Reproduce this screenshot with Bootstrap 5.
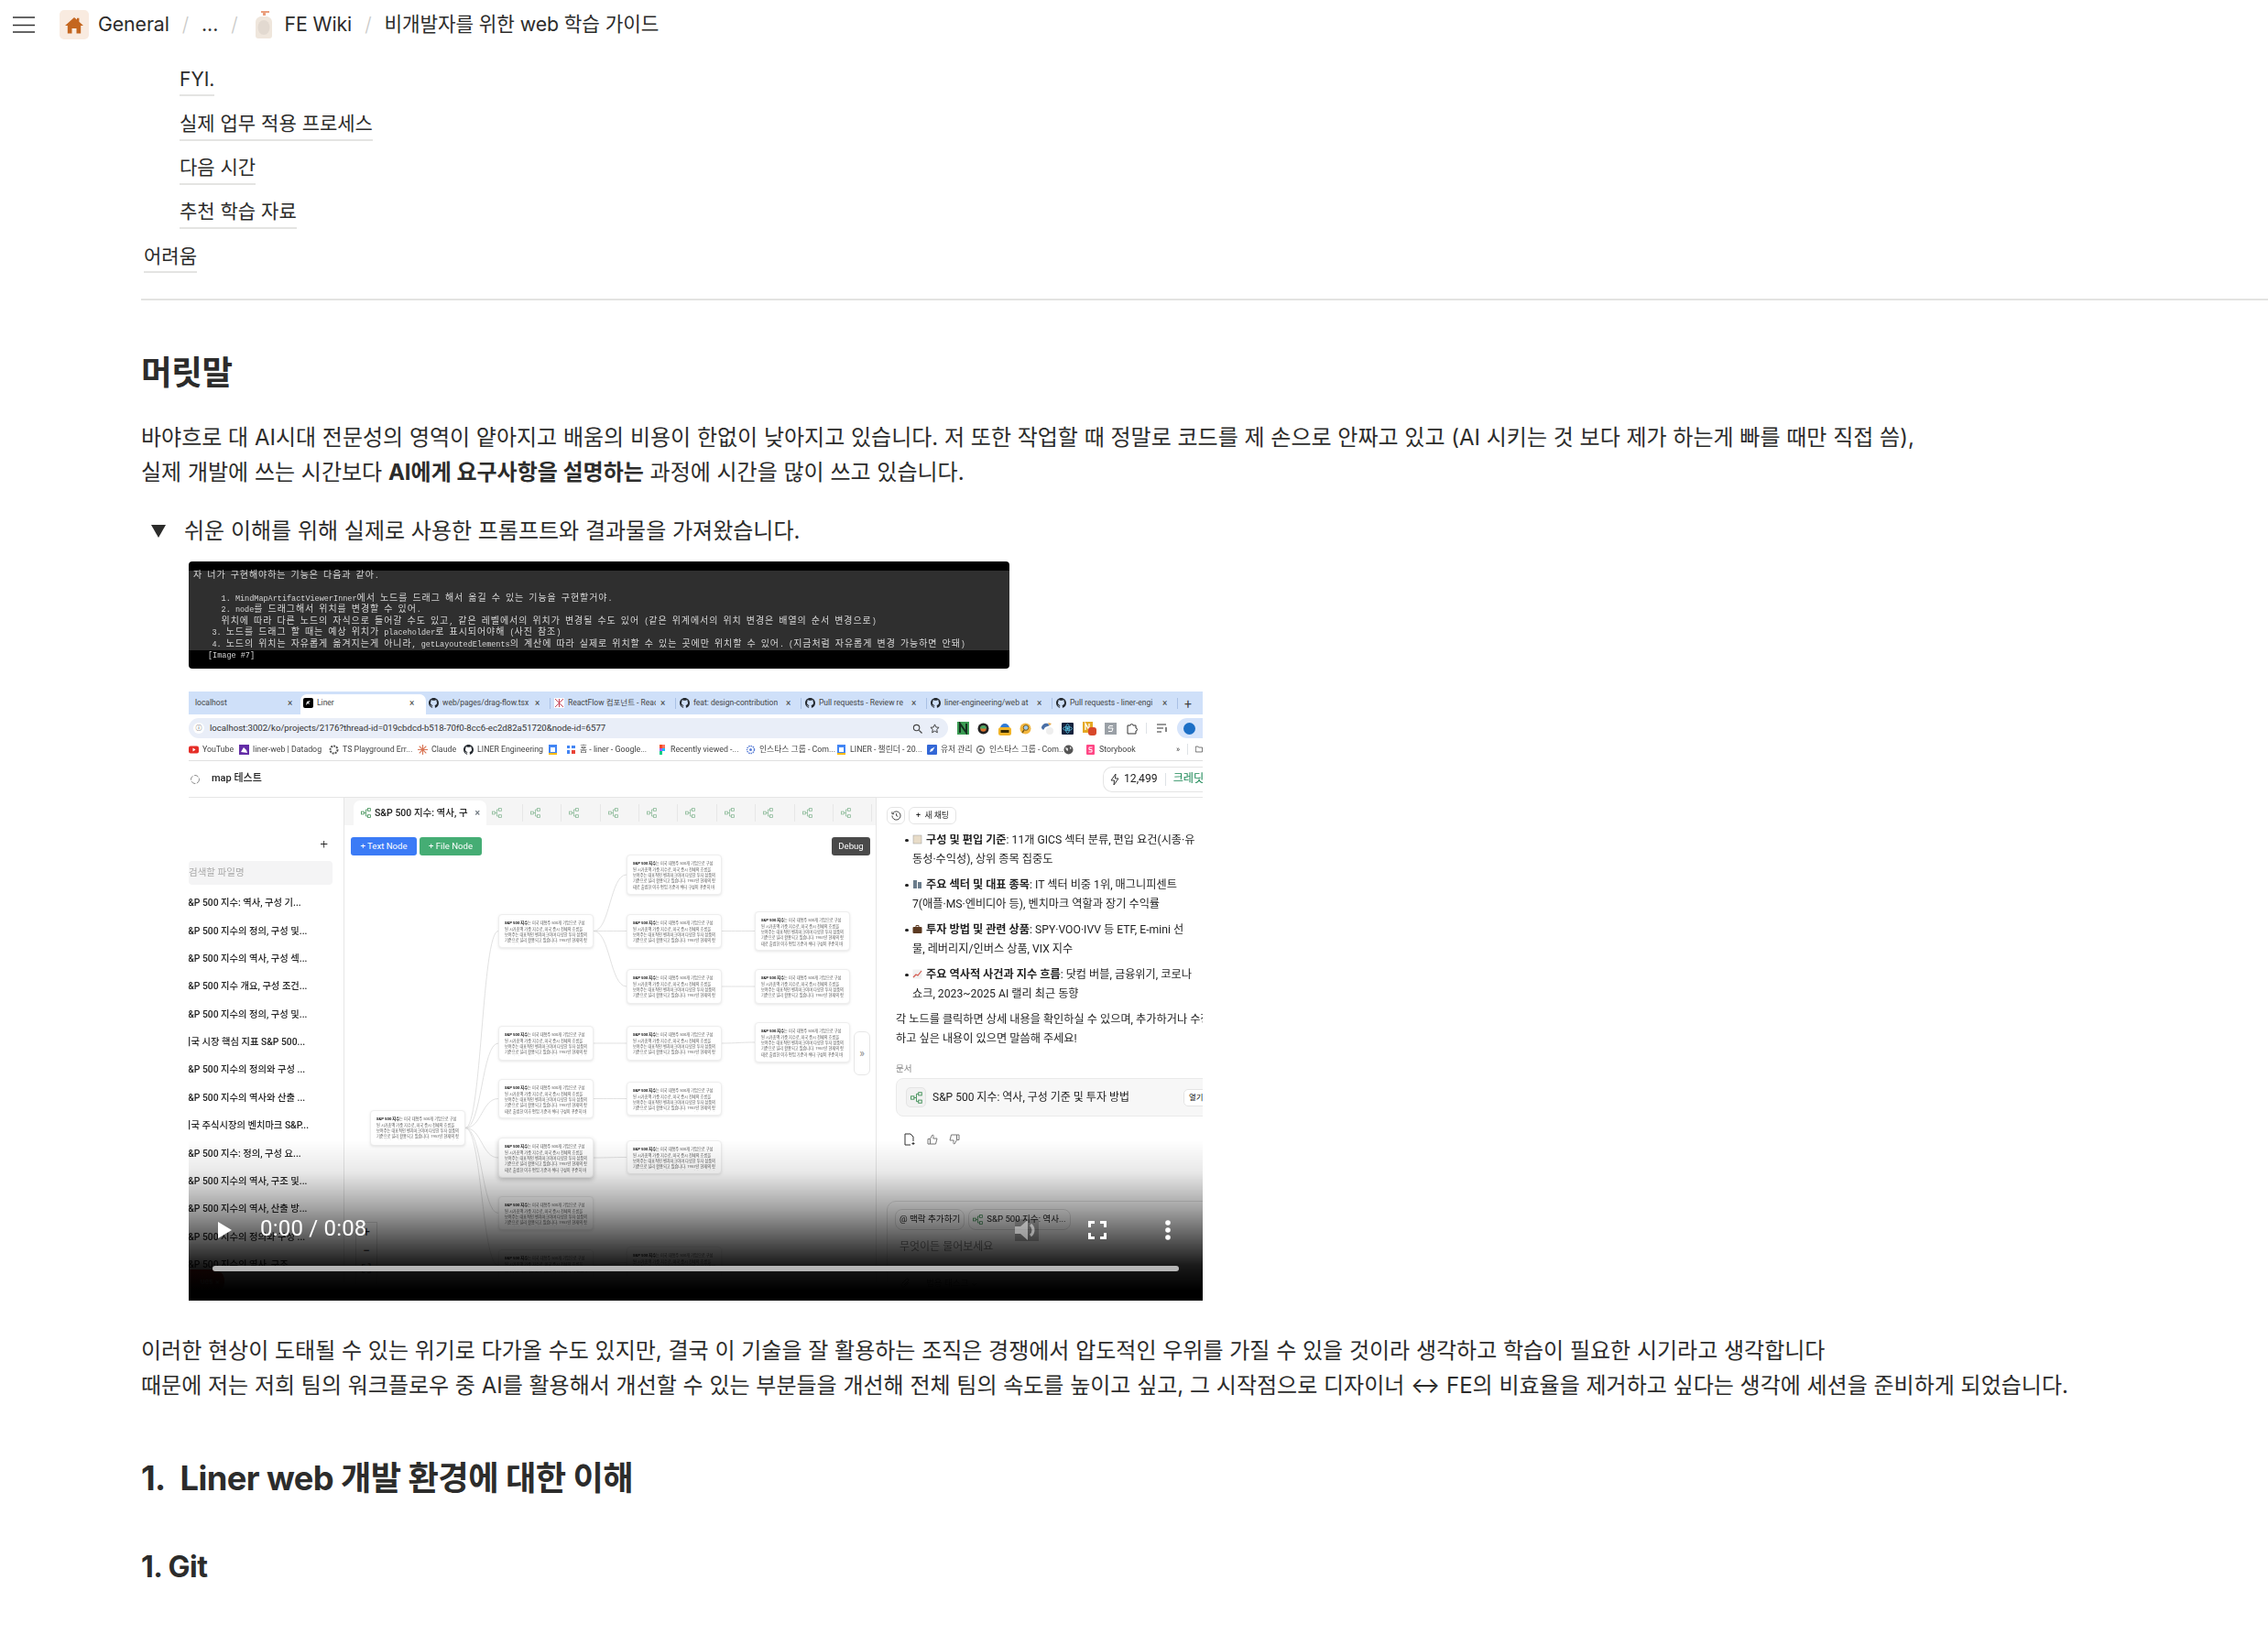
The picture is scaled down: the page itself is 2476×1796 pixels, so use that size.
<!DOCTYPE html>
<html lang="ko">

<head>
    <meta charset="UTF-8">
    <meta name="viewport" content="width=device-width, initial-scale=1.0">
    <title>비개발자를 위한 web 학습 가이드</title>
    <link href="https://cdn.jsdelivr.net/npm/bootstrap@5.3.0/dist/css/bootstrap.min.css" rel="stylesheet">
    <script src="https://cdn.jsdelivr.net/npm/bootstrap@5.3.0/dist/js/bootstrap.bundle.min.js"></script>
    <style>
        body { font-family: Inter, "Noto Sans CJK KR", sans-serif; color: #2c2c2b; background: #fff; overflow-x: hidden; }
        /* 상단 브레드크럼 */
        .topbar { height: 54px; padding-left: 14px; font-size: 21.3px; letter-spacing: -.1px; white-space: nowrap; }
        .burger { width: 24px; height: 18px; margin-right: 27px; }
        .home-box { width: 32px; height: 32px; background: #f9ebe0; border-radius: 5px; margin-right: 10px; }
        .crumb-sep { color: #c9c9c7; margin: 0 14px; font-weight: 300; }
        .bottle { margin: 0 13px 0 4px; }
        /* 본문 */
        .doc { margin-left: 154px; }
        .toc-wrap { padding-top: 10px; }
        .toc-row { height: 48.2px; font-size: 21px; }
        .toc-row span { border-bottom: 2px solid #e4e4e2; padding-bottom: 1px; }
        .toc-sub { padding-left: 42px; }
        .toc-top { padding-left: 3px; }
        .doc-rule { height: 2px; background: #e3e3e1; margin-top: 21px; }
        .doc-h1 { font-size: 36.5px; font-weight: 600; line-height: 50px; margin: 54.5px 0 0; letter-spacing: -.3px; }
        .doc-p { font-size: 24px; line-height: 37.6px; margin: 0; white-space: nowrap; }
        .doc-p-first { margin-top: 26.5px; }
        .doc-h2 { font-size: 36.3px; font-weight: 700; line-height: 50px; margin: 58px 0 0; letter-spacing: -.6px; }
        .doc-h3 { font-size: 32px; font-weight: 700; line-height: 44px; margin: 50px 0 0; letter-spacing: -.5px; }
        .toggle-row { height: 38px; font-size: 24px; margin-top: 27px; }
        .toggle-tri { width: 0; height: 0; border-left: 8.5px solid transparent; border-right: 8.5px solid transparent; border-top: 14px solid #2c2c2b; margin: 0 20px 0 11px; }
        /* 프롬프트 이미지 */
        .prompt-shot { width: 896px; height: 117px; margin: 14px 0 25px 52px; background: #000; border-radius: 4px; padding-top: 10px; overflow: hidden; color: #d5d5d5; font-family: "Liberation Mono", monospace; font-size: 8.5px; filter: blur(.35px); }
        .prompt-body { height: 87px; background: #2f2f2f; padding: 0 5px; line-height: 12.4px; white-space: pre; }
        .prompt-tail { padding-left: 21px; line-height: 12px; white-space: pre; }
        .prompt-ko { font-family: "Noto Sans CJK KR", sans-serif; font-size: 10px; letter-spacing: .93px; line-height: 0; }
        /* 영상 */
        .video-wrap { width: 1107px; height: 665px; margin: 0 0 36px 52px; position: relative; overflow: hidden; background: #fff; }
        .shot { width: 1107px; height: 665px; filter: blur(.3px); font-family: Roboto, Inter, "Noto Sans CJK KR", sans-serif; color: #222; overflow: hidden; }
        .shot-tabs { height: 25px; background: #cfe0f9; padding-top: 3px; font-size: 8.5px; color: #444; }
        .shot-tab { width: 137px; height: 22px; flex: none; padding: 0 0 3px 3px; white-space: nowrap; overflow: hidden; }
        .shot-tab.first { width: 122px; }
        .shot-tab.on { background: #fff; border-radius: 7px 7px 0 0; }
        .shot-tab b { font-weight: 400; width: 96px; overflow: hidden; margin-left: 4px; }
        .shot-tab i { font-style: normal; margin-left: 5px; font-size: 10px; }
        .tab-sep { width: 1px; height: 12px; background: #a9c0e4; margin-left: auto; margin-right: 1px; }
        .tab-ico { width: 11px; height: 11px; flex: none; display: block; }
        .tab-plus { font-size: 14px; margin-left: 6px; }
        .shot-url { height: 26px; padding-top: 4px; background: #fff; }
        .url-pill { width: 829px; height: 22px; background: #e9eef8; border-radius: 11px; font-size: 9.6px; color: #333; padding: 0 9px 0 5px; white-space: nowrap; }
        .url-dot { width: 12px; height: 12px; background: #fff; border-radius: 50%; margin-right: 6px; font-size: 7px; }
        .ext-icons { gap: 9.5px; padding-left: 10px; }
        .ext-sep { height: 12px; }
        .ext-pill { width: 28px; height: 22px; background: #d6e4fb; border-radius: 11px 0 0 11px; margin-left: 1px; }
        .ext-avatar { width: 13px; height: 13px; border-radius: 50%; background: #1c6fc6; margin-right: 8px; }
        .shot-marks { height: 25px; border-bottom: 1px solid #e0e0e0; font-size: 8.8px; color: #444; white-space: nowrap; }
        .mark-item { flex: none; overflow: hidden; gap: 4px; }
        .mark-ico { width: 11px; height: 11px; flex: none; }
        .shot-head { height: 40px; border-bottom: 1px solid #e6e6e6; font-size: 11px; font-weight: 500; padding-left: 1px; }
        .credit-pill { height: 28px; width: 109px; flex: none; border: 1px solid #e4e4e4; border-right: 0; border-radius: 10px 0 0 10px; padding-left: 6px; font-size: 12.2px; font-weight: 400; white-space: nowrap; overflow: hidden; }
        .credit-pill > * { flex-shrink: 0; }
        .credit-sep { height: 14px; }
        .shot-main { height: 548px; }
        .shot-side { width: 170px; flex: none; border-right: 1px solid #e6e6e6; font-size: 10.3px; white-space: nowrap; font-weight: 500; overflow: hidden; }
        .side-plus { height: 69px; padding: 40px 17px 0 0; font-size: 15px; line-height: 20px; font-weight: 300; }
        .side-search { height: 26px; width: 157px; background: #f4f4f5; border-radius: 4px; color: #aaa; font-size: 10.5px; font-weight: 400; line-height: 26px; margin-bottom: 5px; }
        .side-row { height: 30.4px; line-height: 30.4px; margin-left: -7px; width: 175px; overflow: hidden; }
        .shot-map { width: 581px; flex: none; border-right: 1px solid #e6e6e6; }
        .map-tabs { height: 30px; background: #f5f5f5; padding: 3px 0 0 10px; font-size: 10.5px; font-weight: 500; overflow: hidden; }
        .map-tab { width: 145px; height: 27px; background: #fff; border-radius: 7px 7px 0 0; padding-left: 8px; white-space: nowrap; overflow: hidden; flex: none; }
        .map-tab-list { margin-left: -2.5px; }
        .map-tab-sm { width: 42.4px; height: 19px; flex: none; border-right: 1px solid #dedede; padding-left: 8px; opacity: .6; }
        .map-canvas { height: 518px; position: relative; background-color: #fff; background-image: radial-gradient(#dcdcdc .6px, transparent .7px); background-size: 8px 8px; }
        .map-lines { position: absolute; left: 0; top: 0; }
        .map-node { position: absolute; background: #fff; border: 1px solid #eee; border-radius: 4px; box-shadow: 0 1px 3px rgba(0,0,0,.1); font-size: 4.2px; line-height: 6.4px; padding: 6px 6px 0; color: #555; }
        .map-node div { overflow: hidden; }
        .map-node.hot { box-shadow: 0 2px 5px rgba(0,0,0,.22); }
        .map-node b { font-weight: 700; color: #111; }
        .map-btn { position: absolute; top: 13px; height: 20px; border-radius: 3px; color: #fff; font-size: 9.6px; line-height: 20px; text-align: center; }
        .btn-text-node { left: 7px; width: 72px; background: #3b7bf6; }
        .btn-file-node { left: 82px; width: 68px; background: #45ad74; }
        .btn-debug { left: 532px; width: 42px; background: #4a4a4a; }
        .map-fold { position: absolute; left: 556px; top: 225px; width: 18px; height: 48px; border: 1px solid #e6e6e6; border-radius: 6px; background: #fff; color: #888; font-size: 12px; }
        .map-zoom { position: absolute; left: 12px; top: 433px; width: 24px; height: 85px; border: 1px solid #ddd; font-size: 14px; line-height: 20px; text-align: center; background: #fff; }
        .shot-toast { position: absolute; left: 0; top: 631px; width: 39px; height: 26px; border-radius: 0 12px 12px 0; background: #b3261e; color: #fff; font-size: 8px; line-height: 26px; white-space: nowrap; text-align: right; padding-right: 5px; }
        .shot-chat { width: 356px; flex: none; font-size: 12.2px; font-weight: 400; white-space: nowrap; overflow: hidden; }
        .chat-top { height: 39px; padding: 10px 0 0 11px; gap: 4px; }
        .chat-btn { height: 19px; border: 1px solid #e4e4e4; border-radius: 6px; font-size: 8.8px; background: #fff; }
        .chat-btn-hist { width: 20px; }
        .chat-btn-new { width: 52px; }
        .chat-scroll { height: 396px; overflow: hidden; margin-top: 1px; position: relative; }
        .chat-ul { list-style: none; margin: -4.5px 0 0; padding: 0 0 0 39px; line-height: 21.2px; }
        .chat-ul li { margin-bottom: 6.7px; position: relative; }
        .chat-ul li::before { content: ""; position: absolute; left: -8px; top: 9px; width: 3.5px; height: 3.5px; border-radius: 50%; background: #222; }
        .chat-ul b { font-weight: 700; }
        .chat-emo { display: inline-block; width: 11px; height: 11px; vertical-align: -1px; margin-right: 4px; }
        .chat-p { padding-left: 21px; line-height: 21.2px; margin: 6px 0 0; }
        .chat-label { padding-left: 21px; color: #888; font-size: 9.6px; margin-top: 13px; line-height: 18px; }
        .chat-doc { margin: 1px 0 0 21px; height: 42px; width: 360px; background: #f7f7f7; border: 1px solid #eaeaea; border-radius: 8px; padding-left: 10px; font-size: 12px; }
        .chat-doc-ico { width: 22px; height: 22px; border: 1px solid #e4e4e4; border-radius: 5px; background: #f1f1f1; margin-right: 7px; }
        .chat-open { position: absolute; left: 335px; width: 40px; height: 19px; border: 1px solid #e4e4e4; border-radius: 5px; background: #fff; font-size: 8.5px; padding-left: 5px; }
        .chat-acts { padding: 18px 0 0 30px; gap: 12px; }
        .chat-input { margin: 4px 0 0 11px; width: 370px; height: 120px; border: 1px solid #e4e4e4; border-radius: 10px; padding: 8px; font-size: 9.6px; }
        .chat-chip { height: 23px; border: 1px solid #e0e0e0; border-radius: 8px; padding: 0 4px; }
        .chat-hint { font-size: 12px; color: #888; margin: 9px 0 0 5px; }
        .chat-foot { margin: 24px 0 0 5px; color: #666; gap: 9px; }
        /* 영상 컨트롤 */
        .video-ctrl { position: absolute; left: 0; right: 0; bottom: 0; height: 175px; background: linear-gradient(to bottom, rgba(0,0,0,0) 0, rgba(0,0,0,.09) 35px, rgba(0,0,0,.22) 54px, rgba(0,0,0,.36) 74px, rgba(0,0,0,.9) 137px, #000 164px); color: #fff; }
        .ctrl-row { position: absolute; left: 0; right: 0; top: 75px; height: 46px; font-family: Roboto, sans-serif; font-size: 24px; }
        .ctrl-play { margin-left: 32px; }
        .ctrl-time { margin: -4px 0 0 31px; width: 120px; white-space: nowrap; font-weight: 400; letter-spacing: .2px; flex: none; }
        .ctrl-vol { margin-left: 704px; opacity: .38; }
        .ctrl-full { margin-left: 55px; }
        .ctrl-more { margin-left: 64px; }
        .ctrl-bar { position: absolute; left: 26px; top: 137px; width: 1055px; height: 6px; border-radius: 3px; background: #b7b7b7; }
    </style>
</head>

<body>
    <svg width="0" height="0" class="d-block">
        <defs>
            <symbol id="gh" viewBox="0 0 16 16"><path fill="#24292f" d="M8 0C3.58 0 0 3.58 0 8c0 3.54 2.29 6.53 5.47 7.59.4.07.55-.17.55-.38 0-.19-.01-.82-.01-1.49-2.01.37-2.53-.49-2.69-.94-.09-.23-.48-.94-.82-1.13-.28-.15-.68-.52-.01-.53.63-.01 1.08.58 1.23.82.72 1.21 1.87.87 2.33.66.07-.52.28-.87.51-1.07-1.78-.2-3.64-.89-3.64-3.95 0-.87.31-1.59.82-2.15-.08-.2-.36-1.02.08-2.12 0 0 .67-.21 2.2.82.64-.18 1.32-.27 2-.27.68 0 1.36.09 2 .27 1.53-1.04 2.2-.82 2.2-.82.44 1.1.16 1.92.08 2.12.51.56.82 1.27.82 2.15 0 3.07-1.87 3.75-3.65 3.95.29.25.54.73.54 1.48 0 1.07-.01 1.93-.01 2.2 0 .21.15.46.55.38A8.013 8.013 0 0016 8c0-4.42-3.58-8-8-8z"/></symbol>
            <symbol id="flow" viewBox="0 0 14 14"><g fill="none" stroke="#3f8f55" stroke-width="1"><rect x=".6" y="5.200" width="3.600" height="3.600"/><rect x="9.400" y=".8" width="3.800" height="3.400"/><rect x="9.400" y="9.800" width="3.800" height="3.400"/><path d="M4.200 7H7V2.500h2.400M7 7v4.500h2.400"/></g></symbol>
        </defs>
    </svg>

    <!-- 상단 브레드크럼 -->
    <div class="topbar d-flex align-items-center">
        <svg class="burger" viewBox="0 0 24 18"><path d="M0 1h24M0 9.500h24M0 17h24" stroke="#333" stroke-width="1.700"/></svg>
        <span class="home-box d-flex align-items-center justify-content-center">
            <svg width="20" height="19" viewBox="0 0 20 19"><path fill="#c4661f" d="M10 1l3 2.600V1.800h2.400v4L20 10h-2.800v8.500h-4.700v-5.500h-5v5.500H2.800V10H0z"/></svg>
        </span>
        <span>General</span><span class="crumb-sep">/</span><span>...</span><span class="crumb-sep">/</span>
        <svg class="bottle" width="20" height="30" viewBox="0 0 20 30"><path fill="#eb9f7d" d="M7 0h9v2h-4v3h-3V2H7z"/><path fill="#efe6dc" d="M6 6h8c3 1 5 3 5 6v15c0 2-1 3-3 3H4c-2 0-3-1-3-3V12c0-3 2-5 5-6z"/><ellipse cx="10" cy="18" rx="6.500" ry="8" fill="#e2d9d0"/></svg>
        <span>FE Wiki</span><span class="crumb-sep">/</span><span>비개발자를 위한 web 학습 가이드</span>
    </div>

    <div class="doc">
        <div class="toc-wrap">
            <div class="toc-row toc-sub d-flex align-items-center"><span>FYI.</span></div>
            <div class="toc-row toc-sub d-flex align-items-center"><span>실제 업무 적용 프로세스</span></div>
            <div class="toc-row toc-sub d-flex align-items-center"><span>다음 시간</span></div>
            <div class="toc-row toc-sub d-flex align-items-center"><span>추천 학습 자료</span></div>
            <div class="toc-row toc-top d-flex align-items-center"><span>어려움</span></div>
        </div>
        <div class="doc-rule"></div>

        <h1 class="doc-h1">머릿말</h1>
        <p class="doc-p doc-p-first">바야흐로 대 AI시대 전문성의 영역이 얕아지고 배움의 비용이 한없이 낮아지고 있습니다. 저 또한 작업할 때 정말로 코드를 제 손으로 안짜고 있고 (AI 시키는 것 보다 제가 하는게 빠를 때만 직접 씀),<br>실제 개발에 쓰는 시간보다 <strong>AI에게 요구사항을 설명하는</strong> 과정에 시간을 많이 쓰고 있습니다.</p>

        <div class="toggle-row d-flex align-items-center">
            <span class="toggle-tri"></span><span>쉬운 이해를 위해 실제로 사용한 프롬프트와 결과물을 가져왔습니다.</span>
        </div>

        <div class="prompt-shot">
            <div class="prompt-body" id="promptBody"></div>
            <div class="prompt-tail">[Image #7]</div>
        </div>

        <div class="video-wrap">
            <div class="shot">
                <div class="shot-tabs d-flex" id="shotTabs"></div>
                <div class="shot-url d-flex align-items-center">
                    <div class="url-pill d-flex align-items-center">
                        <span class="url-dot d-flex align-items-center justify-content-center">ⓘ</span>
                        <span class="flex-grow-1">localhost:3002/ko/projects/2176?thread-id=019cbdcd-b518-70f0-8cc6-ec2d82a51720&amp;node-id=6577</span>
                        <svg class="me-2" width="11" height="11" viewBox="0 0 12 12"><circle cx="5" cy="5" r="3.500" fill="none" stroke="#444" stroke-width="1.200"/><path d="M8 8l3.500 3.500" stroke="#444" stroke-width="1.400"/></svg>
                        <svg width="11" height="11" viewBox="0 0 12 12"><path fill="none" stroke="#333" d="M6 1l1.500 3.300 3.500.4-2.600 2.400.7 3.600L6 8.900l-3.100 1.800.7-3.600L1 4.700l3.500-.4z"/></svg>
                    </div>
                    <div class="ext-icons d-flex align-items-center">
                        <svg width="13" height="14" viewBox="0 0 13 14"><rect width="13" height="14" fill="#3a9b52"/><path d="M3 12V2l7 10V2" fill="none" stroke="#14301e" stroke-width="2"/></svg>
                        <svg width="13" height="13" viewBox="0 0 13 13"><circle cx="6.500" cy="6.500" r="6" fill="#222"/><circle cx="6.500" cy="6.500" r="3.200" fill="#d9722c"/><path d="M3 6.500a3.500 3.500 0 0 1 7 0z" fill="#4aa564"/></svg>
                        <svg width="14" height="18" viewBox="0 0 14 18"><path fill="#2f7ad6" d="M2 9a5 5 0 0 1 10 0z"/><rect y="8" width="14" height="9" rx="2.500" fill="#f0b429"/><rect x="2.500" y="11" width="9" height="3" fill="#3a2c00"/></svg>
                        <svg width="13" height="13" viewBox="0 0 13 13"><circle cx="6.500" cy="6.500" r="6" fill="#f3b73f"/><circle cx="7" cy="5.500" r="2.800" fill="#9fc7e8" stroke="#7a5a12"/><path d="M5 8l-2 3" stroke="#7a5a12" stroke-width="1.400"/></svg>
                        <svg width="14" height="14" viewBox="0 0 14 14"><path fill="#4a6fa5" d="M1 7c0-4 4-6 7-5l2 2-5 2-2 3z"/><path fill="#e8a33c" d="M8 1l4 1-2 2z"/><circle cx="10" cy="10" r="4" fill="#eee"/></svg>
                        <svg width="13" height="13" viewBox="0 0 13 13"><rect width="13" height="13" rx="1" fill="#17233d"/><circle cx="6.500" cy="6.500" r="1.200" fill="#61dafb"/><ellipse cx="6.500" cy="6.500" rx="5" ry="2" fill="none" stroke="#61dafb" stroke-width=".7"/><ellipse cx="6.500" cy="6.500" rx="2" ry="5" fill="none" stroke="#61dafb" stroke-width=".7"/></svg>
                        <svg width="15" height="15" viewBox="0 0 15 15"><rect width="11" height="12" fill="#e5a823"/><path d="M3 9V2l4 7V2" fill="none" stroke="#fff" stroke-width="1.300"/><rect x="6" y="6" width="9" height="9" rx="3" fill="#d8482a"/></svg>
                        <svg width="13" height="13" viewBox="0 0 13 13"><rect width="13" height="13" fill="#9aa0a6"/><path d="M9 3.500H5L4 6h5l-1 3.500H4" fill="none" stroke="#fff"/></svg>
                        <svg width="13" height="13" viewBox="0 0 13 13"><path fill="none" stroke="#333" d="M2 3h3a1.500 1.500 0 0 1 3 0h3v3a1.500 1.500 0 0 1 0 3v3H2z"/></svg>
                        <span class="border-start ext-sep"></span>
                        <svg width="13" height="12" viewBox="0 0 13 12"><path d="M1 2h10M1 6h7M1 10h5M11 5v5" stroke="#333" stroke-width="1.200"/></svg>
                        <span class="ext-pill d-flex align-items-center justify-content-end"><span class="ext-avatar"></span></span>
                    </div>
                </div>
                <div class="shot-marks d-flex align-items-center" id="shotMarks"></div>
                <div class="shot-head d-flex align-items-center justify-content-between">
                    <div class="d-flex align-items-center">
                        <svg width="12" height="12" viewBox="0 0 12 12" class="me-2"><circle cx="6" cy="6" r="4.500" fill="none" stroke="#888" stroke-dasharray="5 1.500"/></svg>
                        <span class="ms-1">map 테스트</span>
                    </div>
                    <div class="credit-pill d-flex align-items-center">
                        <svg width="12" height="14" viewBox="0 0 12 14"><path fill="none" stroke="#333" d="M7 1L2 8h3.500L5 13l5-7H6.500z"/></svg>
                        <span class="ms-1">12,499</span>
                        <span class="border-start mx-2 credit-sep"></span>
                        <span class="text-success">크레딧 충전</span>
                    </div>
                </div>
                <div class="shot-main d-flex">
                    <div class="shot-side">
                        <div class="side-plus text-end">+</div>
                        <div class="side-search">검색할 파일명</div>
                        <div id="sideList"></div>
                    </div>
                    <div class="shot-map">
                        <div class="map-tabs d-flex">
                            <div class="map-tab d-flex align-items-center">
                                <svg width="11" height="11" class="me-1"><use href="#flow"/></svg>
                                <span>S&amp;P 500 지수: 역사, 구</span><span class="ms-2 text-secondary">×</span>
                            </div>
                            <div class="map-tab-list d-flex align-items-center" id="mapTabs"></div>
                        </div>
                        <div class="map-canvas" id="mapCanvas">
                            <svg class="map-lines" width="581" height="518" id="mapLines"></svg>
                            <div class="map-btn btn-text-node">+ Text Node</div>
                            <div class="map-btn btn-file-node">+ File Node</div>
                            <div class="map-btn btn-debug">Debug</div>
                            <div class="map-fold d-flex align-items-center justify-content-center">»</div>
                            <div class="map-zoom">+<br>−<br>⛶</div>
                        </div>
                    </div>
                    <div class="shot-chat">
                        <div class="chat-top d-flex">
                            <span class="chat-btn chat-btn-hist d-flex align-items-center justify-content-center">
                                <svg width="11" height="11" viewBox="0 0 12 12"><path fill="none" stroke="#333" d="M2 3a5 5 0 1 1-1 3M1 1.500V4h2.500M6 3.500V6l2 1"/></svg>
                            </span>
                            <span class="chat-btn chat-btn-new d-flex align-items-center justify-content-center">+ &nbsp;새 채팅</span>
                        </div>
                        <div class="chat-scroll">
                            <ul class="chat-ul">
                                <li><svg class="chat-emo" viewBox="0 0 11 11"><rect x="1" y="1" width="9" height="9" fill="#e8dcc8" stroke="#999" stroke-width=".5"/></svg><b>구성 및 편입 기준</b>: 11개 GICS 섹터 분류, 편입 요건(시총·유<br>동성·수익성), 상위 종목 집중도</li>
                                <li><svg class="chat-emo" viewBox="0 0 11 11"><path fill="#6b7d8c" d="M1 1h4v9H1zM6 3h4v7H6z"/></svg><b>주요 섹터 및 대표 종목</b>: IT 섹터 비중 1위, 매그니피센트<br>7(애플·MS·엔비디아 등), 벤치마크 역할과 장기 수익률</li>
                                <li><svg class="chat-emo" viewBox="0 0 11 11"><rect x=".5" y="3" width="10" height="7" rx="1" fill="#5c3a21"/><path d="M4 3V1.500h3V3" fill="none" stroke="#5c3a21"/></svg><b>투자 방법 및 관련 상품</b>: SPY·VOO·IVV 등 ETF, E-mini 선<br>물, 레버리지/인버스 상품, VIX 지수</li>
                                <li><svg class="chat-emo" viewBox="0 0 11 11"><rect x=".5" y=".5" width="10" height="10" fill="#f1f1f1"/><path d="M1 9l3-3 2 1 4-5" fill="none" stroke="#d4574c" stroke-width="1.200"/></svg><b>주요 역사적 사건과 지수 흐름</b>: 닷컴 버블, 금융위기, 코로나<br>쇼크, 2023~2025 AI 랠리 최근 동향</li>
                            </ul>
                            <p class="chat-p">각 노드를 클릭하면 상세 내용을 확인하실 수 있으며, 추가하거나 수정<br>하고 싶은 내용이 있으면 말씀해 주세요!</p>
                            <div class="chat-label">문서</div>
                            <div class="chat-doc d-flex align-items-center">
                                <span class="chat-doc-ico d-flex align-items-center justify-content-center"><svg width="13" height="13"><use href="#flow"/></svg></span>
                                <span>S&amp;P 500 지수: 역사, 구성 기준 및 투자 방법</span>
                                <span class="chat-open d-flex align-items-center">열기</span>
                            </div>
                            <div class="chat-acts d-flex align-items-center">
                                <svg width="13" height="14" viewBox="0 0 13 14"><path fill="none" stroke="#333" d="M1 1h6l3 3v5M1 1v12h6M10 10v3M8.500 11.500h3"/></svg>
                                <svg width="12" height="12" viewBox="0 0 12 12"><path fill="none" stroke="#777" d="M1 5.500h2.500V11H1zM3.500 5.500L6 1c1 0 1.500 1 1 2.500L6.800 5H11l-1.500 6h-6"/></svg>
                                <svg width="12" height="12" viewBox="0 0 12 12"><path fill="none" stroke="#777" d="M11 6.500H8.500V1H11zM8.500 6.500L6 11c-1 0-1.500-1-1-2.500L5.200 7H1l1.500-6h6"/></svg>
                            </div>
                        </div>
                        <div class="chat-input">
                            <div class="d-flex gap-1">
                                <span class="chat-chip d-flex align-items-center">@ 맥락 추가하기</span>
                                <span class="chat-chip d-flex align-items-center"><svg width="11" height="11" class="me-1"><use href="#flow"/></svg>S&amp;P 500 지수: 역사...</span>
                            </div>
                            <div class="chat-hint">무엇이든 물어보세요</div>
                            <div class="chat-foot d-flex align-items-center">
                                <svg width="12" height="12" viewBox="0 0 12 12"><path fill="none" stroke="#555" d="M10 5L5.500 9.500a2 2 0 0 1-3-3L7.500 1.500a1.300 1.300 0 0 1 2 2L5 8"/></svg>
                                <span class="ms-2">범용 태스크 ⌄</span>
                            </div>
                        </div>
                    </div>
                </div>
            </div>

            <div class="shot-toast">ues ×</div>
            <div class="video-ctrl">
                <div class="ctrl-row d-flex align-items-center">
                    <svg class="ctrl-play" width="15" height="18" viewBox="0 0 15 18"><path fill="#fff" d="M0 0l15 9-15 9z"/></svg>
                    <span class="ctrl-time">0:00 / 0:08</span>
                    <svg class="ctrl-vol" width="25" height="24" viewBox="0 0 25 24"><path fill="#fff" d="M0 8h6l8-7v22l-8-7H0z"/><path fill="none" stroke="#fff" stroke-width="3" d="M17 6c4 3 4 9 0 12"/></svg>
                    <svg class="ctrl-full" width="20" height="20" viewBox="0 0 20 20"><path fill="none" stroke="#fff" stroke-width="3" d="M1.500 7V1.500H7M13 1.500h5.500V7M18.500 13v5.500H13M7 18.500H1.500V13"/></svg>
                    <svg class="ctrl-more" width="6" height="22" viewBox="0 0 6 22"><circle cx="3" cy="3" r="2.800" fill="#fff"/><circle cx="3" cy="11" r="2.800" fill="#fff"/><circle cx="3" cy="19" r="2.800" fill="#fff"/></svg>
                </div>
                <div class="ctrl-bar"></div>
            </div>
        </div>

        <p class="doc-p">이러한 현상이 도태될 수 있는 위기로 다가올 수도 있지만, 결국 이 기술을 잘 활용하는 조직은 경쟁에서 압도적인 우위를 가질 수 있을 것이라 생각하고 학습이 필요한 시기라고 생각합니다<br>때문에 저는 저희 팀의 워크플로우 중 AI를 활용해서 개선할 수 있는 부분들을 개선해 전체 팀의 속도를 높이고 싶고, 그 시작점으로 디자이너 ↔ FE의 비효율을 제거하고 싶다는 생각에 세션을 준비하게 되었습니다.</p>

        <h2 class="doc-h2">1.&nbsp; Liner web 개발 환경에 대한 이해</h2>
        <h3 class="doc-h3">1. Git</h3>
    </div>

    <script>
        // 프롬프트, 탭, 북마크, 사이드 목록, 마인드맵 노드는 데이터로 그린다
        const promptLines = [
            '자 너가 구현해야하는 기능은 다음과 같아.',
            '',
            '      1. MindMapArtifactViewerInner에서 노드를 드래그 해서 옮길 수 있는 기능을 구현할거야.',
            '      2. node를 드래그해서 위치를 변경할 수 있어.',
            '      위치에 따라 다른 노드의 자식으로 들어갈 수도 있고, 같은 레벨에서의 위치가 변경될 수도 있어 (같은 위계에서의 위치 변경은 배열의 순서 변경으로)',
            '    3. 노드를 드래그 할 때는 예상 위치가 placeholder로 표시되어야해 (사진 참조)',
            '    4. 노드의 위치는 자유롭게 옮겨지는게 아니라, getLayoutedElements의 계산에 따라 실제로 위치할 수 있는 곳에만 위치할 수 있어. (지금처럼 자유롭게 변경 가능하면 안돼)'
        ];
        document.getElementById('promptBody').innerHTML = promptLines.map(function (l) {
            return l.replace(/[가-힣]+/g, '<span class="prompt-ko">$&</span>');
        }).join('\n');

        const ghIcon = '<svg class="tab-ico"><use href="#gh"/></svg>';

        const tabs = [
            ['localhost', ''], ['Liner', 'liner'], ['web/pages/drag-flow.tsx', 'gh'], ['ReactFlow 컴포넌트 - React', 'rf'],
            ['feat: design-contribution', 'gh'], ['Pull requests - Review re', 'gh'], ['liner-engineering/web at', 'gh'], ['Pull requests - liner-engi', 'gh']
        ];
        let tabHtml = '';
        tabs.forEach(function (t, i) {
            let ico = '';
            if (t[1] === 'gh') ico = ghIcon;
            if (t[1] === 'liner') ico = '<svg class="tab-ico" viewBox="0 0 11 11"><rect width="11" height="11" rx="2"/><path fill="#fff" d="M3 8l1-4 4-1-2 2 1 2-2-1z"/></svg>';
            if (t[1] === 'rf') ico = '<svg class="tab-ico" viewBox="0 0 11 11"><rect width="11" height="11" fill="#fff"/><path d="M1 1l9 9M10 1l-9 9M5.500 1v9" stroke="#c5475b"/></svg>';
            const sep = i > 1 ? '<span class="tab-sep"></span>' : '';
            tabHtml += `<div class="shot-tab ${i === 0 ? 'first' : ''} ${i === 1 ? 'on' : ''} d-flex align-items-center">${ico}<b>${t[0]}</b><i>×</i>${sep}</div>`;
        });
        tabHtml += '<div class="tab-plus d-flex align-items-center">+</div>';
        document.getElementById('shotTabs').innerHTML = tabHtml;

        const markIcons = {
            yt: '<rect y="1.500" width="11" height="8" rx="2" fill="#e52d27"/><path fill="#fff" d="M4.500 3.500l3 2-3 2z"/>',
            dd: '<rect width="11" height="11" fill="#632ca6"/><path fill="#fff" d="M2 8l3-5 3 3 1 3z"/>',
            ts: '<circle cx="5.500" cy="5.500" r="4" fill="none" stroke="#555" stroke-width="2" stroke-dasharray="2 1"/>',
            claude: '<path stroke="#d97757" stroke-width="1.200" d="M5.500 0v11M0 5.500h11M1.700 1.700l7.600 7.600M9.300 1.700l-7.600 7.600"/>',
            gh: '<use href="#gh" width="11" height="11"/>',
            doc: '<rect x="1" width="9" height="11" fill="#4285f4"/><rect x="3" y="3" width="5" height="5" fill="#fff"/><rect x="1" y="9" width="9" height="2" fill="#fbbc04"/>',
            home: '<path fill="#4285f4" d="M1 1h3v3H1zM6 1h4v3H6zM1 6h3v4H1z"/><path fill="#ea4335" d="M6 6h4v4H6z"/>',
            figma: '<path fill="#f24e1e" d="M3 0h3v4H3z"/><path fill="#a259ff" d="M3 4h3v3H3z"/><path fill="#1abcfe" d="M6 4h3v3H6z"/><path fill="#0acf83" d="M3 7h3v4H3z"/><path fill="#ff7262" d="M6 0h3v4H6z"/>',
            chip: '<circle cx="5.500" cy="5.500" r="4" fill="none" stroke="#5b7fd6" stroke-width="1.500" stroke-dasharray="1.500 .8"/><circle cx="5.500" cy="5.500" r="1.500" fill="#5b7fd6"/>',
            rocket: '<rect width="11" height="11" rx="1" fill="#3367d6"/><path fill="#fff" d="M8.500 2.500L4 5l-1 3 3-1z"/>',
            ring: '<circle cx="5.500" cy="5.500" r="4" fill="none" stroke="#777" stroke-width="1.300"/><circle cx="5.500" cy="5.500" r="1.500" fill="#777"/>',
            globe: '<circle cx="5.500" cy="5.500" r="5" fill="#555"/><path fill="#ddd" d="M2 3l3 1v3L3 6zM7 2l2 2-2 1z"/>',
            sb: '<rect x="1" width="9" height="11" rx="1" fill="#ff4785"/><path fill="none" stroke="#fff" d="M7.500 3H4v2.500h3V8H3.500"/>'
        };
        const marks = [
            ['YouTube', 'yt', 55], ['liner-web | Datadog', 'dd', 98], ['TS Playground Err...', 'ts', 97], ['Claude', 'claude', 50],
            ['LINER Engineering', 'gh', 92], ['', 'doc', 20], ['홈 - liner - Google...', 'home', 99], ['Recently viewed -...', 'figma', 97],
            ['인스타스 그룹 - Com...', 'chip', 99], ['LINER - 챌린더 - 20...', 'doc', 99], ['유저 관리', 'rocket', 53], ['인스타스 그룹 - Com...', 'ring', 96],
            ['', 'globe', 24], ['Storybook', 'sb', 75]
        ];
        let markHtml = '';
        marks.forEach(function (m) {
            markHtml += `<div class="mark-item d-flex align-items-center" style="width:${m[2]}px"><svg class="mark-ico" viewBox="0 0 11 11">${markIcons[m[1]]}</svg><span>${m[0]}</span></div>`;
        });
        markHtml += '<span class="ms-4">»</span><span class="border-start ms-2 ext-sep"></span><svg class="ms-2" width="12" height="10" viewBox="0 0 12 10"><path fill="none" stroke="#333" d="M.5.500h4l1 1.500h6v7.500H.5z"/></svg>';
        document.getElementById('shotMarks').innerHTML = markHtml;

        const files = ['S&P 500 지수: 역사, 구성 기...', 'S&P 500 지수의 정의, 구성 및...', 'S&P 500 지수의 역사, 구성 섹...', 'S&P 500 지수 개요, 구성 조건...',
            'S&P 500 지수의 정의, 구성 및...', '미국 시장 핵심 지표 S&P 500...', 'S&P 500 지수의 정의와 구성 ...', 'S&P 500 지수의 역사와 산출 ...',
            '미국 주식시장의 벤치마크 S&P...', 'S&P 500 지수: 정의, 구성 요...', 'S&P 500 지수의 역사, 구조 및...', 'S&P 500 지수의 역사, 산출 방...',
            'S&P 500 지수의 정의와 구성 ...', 'S&P 500 지수의 역사, 구조...'];
        document.getElementById('sideList').innerHTML = files.map(function (f) {
            return `<div class="side-row">${f.replace('&', '&amp;')}</div>`;
        }).join('');

        let smallTabs = '';
        for (let i = 0; i < 10; i++) {
            smallTabs += '<div class="map-tab-sm d-flex align-items-center"><svg width="11" height="11"><use href="#flow"/></svg></div>';
        }
        document.getElementById('mapTabs').innerHTML = smallTabs;

        // [x, y, w, h] 캔버스 기준 좌표
        const nodeText = '<b>S&amp;P 500 지수</b>는 미국 대형주 500개 기업으로 구성된 시가총액 가중 지수로, 미국 증시 전체의 흐름을 보여주는 대표적인 벤치마크이며 다양한 투자 상품의 기준으로 널리 활용되고 있습니다. 1957년 현재의 형태로 출범한 이후 편입 기준과 섹터 구성이 꾸준히 바뀌어 왔고 장기 수익률의 기준점이 됩니다. 지수 산출 방식과 역사를 함께 살펴봅니다.';
        const nodes = {
            a: [28, 311, 104, 39], b1: [168, 97, 104, 37], b2: [168, 219, 104, 38], b3: [168, 277, 104, 43], b4: [168, 341, 104, 44, 'hot'],
            b5: [168, 405, 104, 37], b6: [168, 463, 104, 35], c1: [308, 32, 104, 44], c2: [308, 97, 104, 37], c3: [308, 157, 104, 38],
            c4: [308, 219, 104, 38], c5: [308, 280, 104, 37], c6: [308, 344, 104, 37], c7: [308, 460, 104, 35],
            d1: [448, 94, 104, 43], d2: [448, 157, 104, 38], d3: [448, 215, 104, 44]
        };
        const links = [['a','b1'],['a','b2'],['a','b3'],['a','b4'],['a','b5'],['a','b6'],['b1','c1'],['b1','c2'],['b1','c3'],['b2','c4'],['b3','c5'],['b4','c6'],['b6','c7'],['c2','d1'],['c3','d2'],['c4','d3']];
        let lineHtml = '';
        links.forEach(function (l) {
            const p = nodes[l[0]], c = nodes[l[1]];
            const x1 = p[0] + p[2], y1 = p[1] + p[3] / 2, x2 = c[0], y2 = c[1] + c[3] / 2, mx = (x1 + x2) / 2;
            lineHtml += `<path d="M${x1} ${y1}C${mx} ${y1} ${mx} ${y2} ${x2} ${y2}" fill="none" stroke="#d9d9d9" stroke-width=".8"/>`;
        });
        document.getElementById('mapLines').innerHTML = lineHtml;
        const canvas = document.getElementById('mapCanvas');
        Object.values(nodes).forEach(function (n) {
            const el = document.createElement('div');
            el.className = 'map-node ' + (n[4] || '');
            el.style.cssText = `left:${n[0]}px;top:${n[1]}px;width:${n[2]}px;height:${n[3]}px`;
            const rows = Math.floor((n[3] - 10) / 6.4);
            el.innerHTML = `<div style="height:${rows * 6.4}px">${nodeText}</div>`;
            canvas.appendChild(el);
        });
    </script>
</body>

</html>
